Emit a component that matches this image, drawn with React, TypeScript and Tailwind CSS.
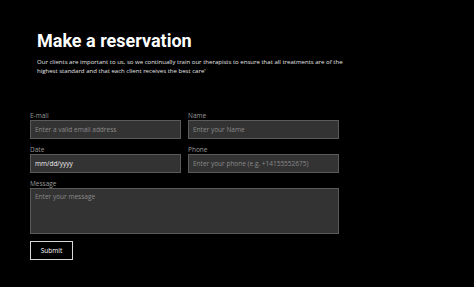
export default function App() {
    return (
        <div className="w-[474px] h-[287px] bg-black overflow-hidden font-['Open_Sans',sans-serif]">
            <div className="w-[309px] ml-[30px] pt-[30px]">
                <div className="pl-[7px]">
                    <h1 className="font-['Roboto',sans-serif] font-bold text-white text-[18px] leading-[22px]">
                        Make a reservation
                    </h1>
                    <p className="mt-[6px] w-[315px] text-[6.05px] leading-[9px] text-[#e5e5e5]">
                        Our clients are important to us, so we continually train our therapists to ensure that all treatments are of the highest standard and that each client receives the best care'
                    </p>
                </div>
                <form className="mt-[35px] grid grid-cols-2 gap-x-[7px] gap-y-[6px]">
                    <Field label="E-mail" placeholder="Enter a valid email address" />
                    <Field label="Name" placeholder="Enter your Name" />
                    <Field label="Date" placeholder="mm/dd/yyyy" value />
                    <Field label="Phone" placeholder="Enter your phone (e.g. +14155552675)" />
                    <div className="col-span-2">
                        <div className="text-[6.5px] leading-[9px] text-[#9a9a9a]">Message</div>
                        <div className="h-[46px] bg-[#333333] border border-[#5a5a5a] px-[4px] pt-[3px] text-[6.5px] text-[#8a8a8a]">
                            Enter your message
                        </div>
                    </div>
                    <div className="col-span-2 mt-[1px]">
                        <button type="button" className="w-[43px] h-[19px] border-[1.5px] border-[#d8d8d8] text-white text-[6.5px] flex items-center justify-center">
                            Submit
                        </button>
                    </div>
                </form>
            </div>
        </div>
    );
}

function Field({ label, placeholder, value }: { label: string; placeholder: string; value?: boolean }) {
    return (
        <div>
            <div className="text-[6.5px] leading-[9px] text-[#9a9a9a]">{label}</div>
            <div className={`h-[19px] bg-[#333333] border border-[#5a5a5a] px-[4px] flex items-center text-[6.5px] ${value ? "text-[#f0f0f0]" : "text-[#8a8a8a]"}`}>
                {placeholder}
            </div>
        </div>
    );
}
